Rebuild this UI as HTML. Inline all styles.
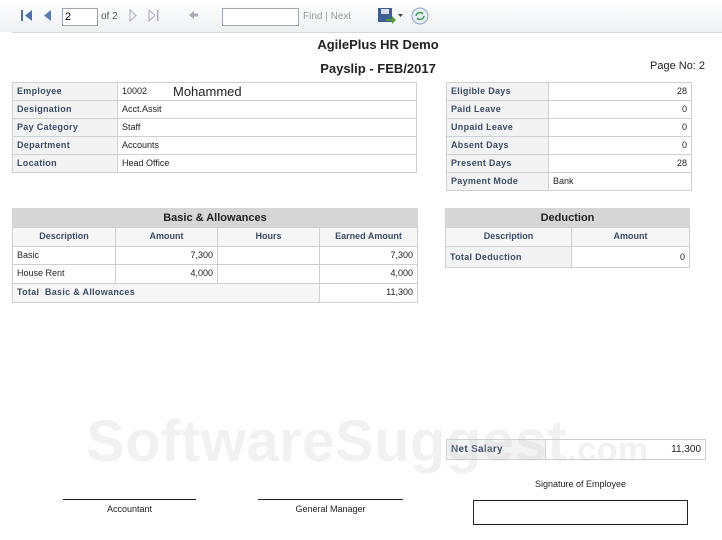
<!DOCTYPE html><html><head><style>
*{margin:0;padding:0;box-sizing:border-box}
body{width:722px;height:540px;background:#fff;font-family:"Liberation Sans",Arial,sans-serif;position:relative;overflow:hidden}
.a{position:absolute}
.c{position:absolute;border:1px solid #d0d0d0;font-size:9px;color:#222;padding:0 4px;line-height:17px;white-space:nowrap}
.l{background:#f3f3f3;color:#3d4c66;font-weight:bold;font-size:9px;letter-spacing:.3px}
.r{text-align:right}
.h{background:#d6d6d6;font-weight:bold;font-size:11px;text-align:center;color:#222}
.s{background:#f6f6f6;color:#3d4c66;text-align:center;font-weight:bold}
</style></head><body>
<div class="a" style="left:0;top:0;width:722px;height:32px;background:linear-gradient(#fff,#eef0f2)"></div>
<div class="a" style="left:12px;top:32px;width:710px;height:1px;background:#d8d8d8"></div>
<svg class="a" style="left:18px;top:7px" width="200" height="18">
<rect x="3" y="3" width="2" height="11" fill="#4f6fa8"/><path d="M14 3 L7 8.5 L14 14Z" fill="#4f6fa8"/>
<path d="M33 3 L26 8.5 L33 14Z" fill="#5b7bb5"/>
<path d="M112 3 L118 8.5 L112 14Z" fill="none" stroke="#aab"/>
<path d="M131 3 L137 8.5 L131 14Z" fill="none" stroke="#aab"/><rect x="139" y="3" width="1.5" height="11" fill="#aab"/>
<path d="M176 4 L171 8 L176 12Z" fill="#aab"/><rect x="176" y="6.5" width="4" height="3" fill="#aab"/>
</svg>
<div class="a" style="left:62px;top:8px;width:36px;height:18px;border:1px solid #a0a6b0;background:#fff;font-size:11px;padding-left:2px;line-height:16px">2</div>
<div class="a" style="left:101px;top:11px;font-size:10px;color:#555">of 2</div>
<div class="a" style="left:222px;top:8px;width:77px;height:18px;border:1px solid #a0a6b0;background:#fff"></div>
<div class="a" style="left:303px;top:11px;font-size:10px;color:#999">Find | Next</div>
<svg class="a" style="left:377px;top:7px" width="54" height="20">
<rect x="1" y="1" width="14" height="14" fill="#3f5e93"/><rect x="4" y="2" width="8" height="5" fill="#dde"/><path d="M9 12 h6 v-3 l4 4 -4 4 v-3 h-6z" fill="#5a9a3a"/>
<path d="M21 7 h5 l-2.5 3z" fill="#444"/>
<circle cx="43" cy="9" r="8" fill="#e8eef6" stroke="#8aa4c8"/><path d="M39 9 a4 4 0 0 1 7 -2 M47 9 a4 4 0 0 1 -7 2" stroke="#4a9a4a" stroke-width="1.5" fill="none"/>
</svg>
<div class="a" style="left:0;top:37px;width:756px;text-align:center;font-size:13px;font-weight:bold;color:#222">AgilePlus HR Demo</div>
<div class="a" style="left:0;top:61px;width:756px;text-align:center;font-size:13px;font-weight:bold;color:#222">Payslip - FEB/2017</div>
<div class="a" style="left:650px;top:60px;font-size:11px;color:#222">Page No: 2</div>

<div class="c l" style="left:12px;top:82px;width:106px;height:19px">Employee</div><div class="c" style="left:117px;top:82px;width:300px;height:19px">10002</div>
<div class="a" style="left:173px;top:84px;font-size:13px;color:#222">Mohammed</div>
<div class="c l" style="left:12px;top:100px;width:106px;height:19px">Designation</div><div class="c" style="left:117px;top:100px;width:300px;height:19px">Acct.Assit</div>
<div class="c l" style="left:12px;top:118px;width:106px;height:19px">Pay Category</div><div class="c" style="left:117px;top:118px;width:300px;height:19px">Staff</div>
<div class="c l" style="left:12px;top:136px;width:106px;height:19px">Department</div><div class="c" style="left:117px;top:136px;width:300px;height:19px">Accounts</div>
<div class="c l" style="left:12px;top:154px;width:106px;height:19px">Location</div><div class="c" style="left:117px;top:154px;width:300px;height:19px">Head Office</div>

<div class="c l" style="left:446px;top:82px;width:103px;height:19px">Eligible Days</div><div class="c r" style="left:548px;top:82px;width:144px;height:19px">28</div>
<div class="c l" style="left:446px;top:100px;width:103px;height:19px">Paid Leave</div><div class="c r" style="left:548px;top:100px;width:144px;height:19px">0</div>
<div class="c l" style="left:446px;top:118px;width:103px;height:19px">Unpaid Leave</div><div class="c r" style="left:548px;top:118px;width:144px;height:19px">0</div>
<div class="c l" style="left:446px;top:136px;width:103px;height:19px">Absent Days</div><div class="c r" style="left:548px;top:136px;width:144px;height:19px">0</div>
<div class="c l" style="left:446px;top:154px;width:103px;height:19px">Present Days</div><div class="c r" style="left:548px;top:154px;width:144px;height:19px">28</div>
<div class="c l" style="left:446px;top:172px;width:103px;height:19px">Payment Mode</div><div class="c" style="left:548px;top:172px;width:144px;height:19px">Bank</div>

<div class="c h" style="left:12px;top:208px;width:406px;height:20px;line-height:19px;border-color:#d6d6d6">Basic &amp; Allowances</div>
<div class="c s" style="left:12px;top:227px;width:104px;height:20px">Description</div>
<div class="c s" style="left:115px;top:227px;width:103px;height:20px">Amount</div>
<div class="c s" style="left:217px;top:227px;width:103px;height:20px">Hours</div>
<div class="c s" style="left:319px;top:227px;width:99px;height:20px">Earned Amount</div>
<div class="c" style="left:12px;top:246px;width:104px;height:19px">Basic</div><div class="c r" style="left:115px;top:246px;width:103px;height:19px">7,300</div><div class="c" style="left:217px;top:246px;width:103px;height:19px"></div><div class="c r" style="left:319px;top:246px;width:99px;height:19px">7,300</div>
<div class="c" style="left:12px;top:264px;width:104px;height:20px">House Rent</div><div class="c r" style="left:115px;top:264px;width:103px;height:20px">4,000</div><div class="c" style="left:217px;top:264px;width:103px;height:20px"></div><div class="c r" style="left:319px;top:264px;width:99px;height:20px">4,000</div>
<div class="c l" style="left:12px;top:283px;width:308px;height:20px;background:#f6f6f6">Total &nbsp;Basic &amp; Allowances</div><div class="c r" style="left:319px;top:283px;width:99px;height:20px">11,300</div>

<div class="c h" style="left:445px;top:208px;width:245px;height:20px;line-height:19px;border-color:#d6d6d6">Deduction</div>
<div class="c s" style="left:445px;top:227px;width:127px;height:20px">Description</div>
<div class="c s" style="left:571px;top:227px;width:119px;height:20px">Amount</div>
<div class="c l" style="left:445px;top:246px;width:127px;height:22px;line-height:20px">Total Deduction</div><div class="c r" style="left:571px;top:246px;width:119px;height:22px;line-height:20px">0</div>

<div class="c l" style="left:446px;top:439px;width:100px;height:21px;font-size:10px;line-height:19px;background:#f3f3f3">Net Salary</div><div class="c r" style="left:545px;top:439px;width:161px;height:21px;font-size:10px;line-height:19px">11,300</div>

<div class="a" style="left:86px;top:408px;font-size:58px;font-weight:bold;color:rgba(200,200,200,0.25);letter-spacing:0.5px;white-space:nowrap">SoftwareSuggest<span style="font-size:34px">.com</span></div>

<div class="a" style="left:63px;top:499px;width:133px;height:1px;background:#222"></div>
<div class="a" style="left:63px;top:504px;width:133px;text-align:center;font-size:9px;color:#222">Accountant</div>
<div class="a" style="left:258px;top:499px;width:145px;height:1px;background:#222"></div>
<div class="a" style="left:258px;top:504px;width:145px;text-align:center;font-size:9px;color:#222">General Manager</div>
<div class="a" style="left:473px;top:479px;width:215px;text-align:center;font-size:9px;color:#222">Signature of Employee</div>
<div class="a" style="left:473px;top:500px;width:215px;height:25px;border:1px solid #222"></div>
</body></html>
